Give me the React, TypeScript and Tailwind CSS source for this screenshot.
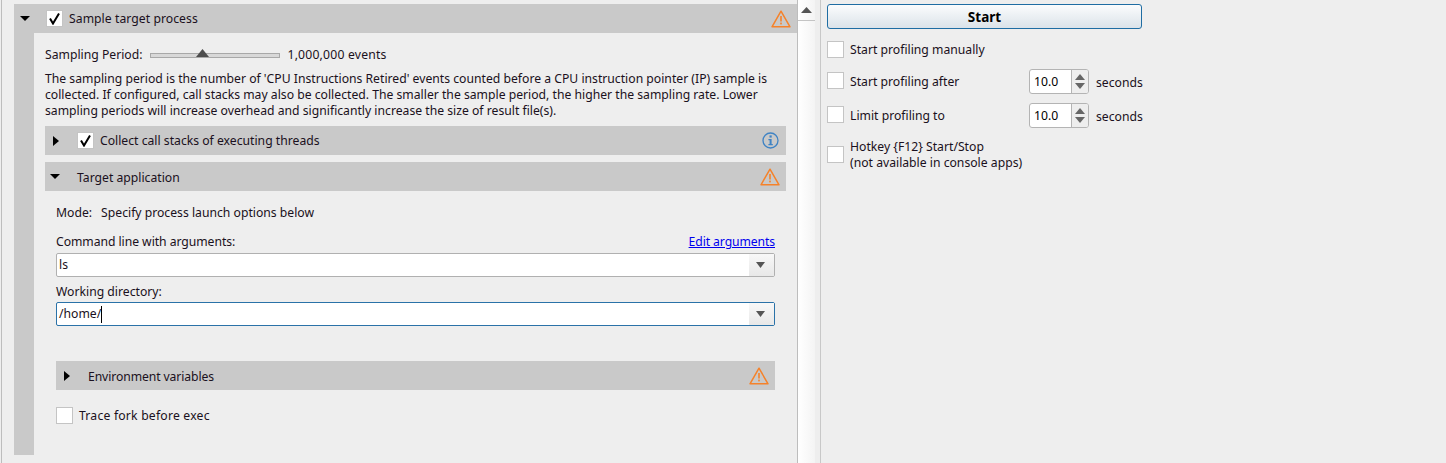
import React from "react";

const Warn = () => (
  <svg width="20" height="18" viewBox="0 0 20 18" fill="none" className="shrink-0">
    <path d="M10 1.2 L19 16.8 H1 Z" stroke="#f5822a" strokeWidth="1.5" strokeLinejoin="round" />
    <rect x="9.2" y="6" width="1.6" height="5.5" fill="#f5822a" />
    <rect x="9.2" y="12.6" width="1.6" height="1.8" fill="#f5822a" />
  </svg>
);

const Info = () => (
  <svg width="17" height="17" viewBox="0 0 17 17" fill="none" className="shrink-0">
    <circle cx="8.5" cy="8.5" r="7.5" stroke="#3f83c4" strokeWidth="1.3" />
    <rect x="7.5" y="3.4" width="2.2" height="2.2" fill="#3f83c4" />
    <path d="M6.4 7 H9.6 V12 H10.8 V13.2 H6.4 V12 H7.6 V8.2 H6.4 Z" fill="#3f83c4" />
  </svg>
);

const Down = () => (
  <svg width="10" height="5" viewBox="0 0 10 5" className="shrink-0"><path d="M0 0 H10 L5 5 Z" fill="#000" /></svg>
);
const Right = () => (
  <svg width="6" height="10" viewBox="0 0 6 10" className="shrink-0"><path d="M0 0 V10 L6 5 Z" fill="#000" /></svg>
);

const Check = ({ checked = false }: { checked?: boolean }) => (
  <div className="w-[17px] h-[17px] shrink-0 bg-white border border-[#c4c4c4] flex items-center justify-center">
    {checked && (
      <svg width="13" height="13" viewBox="0 0 13 13" fill="none">
        <path d="M2 6.5 L5 11.5 L11 1.5" stroke="#000" strokeWidth="2" />
      </svg>
    )}
  </div>
);

const Combo = ({ text, focused = false }: { text: string; focused?: boolean }) => (
  <div className={`h-[24px] flex items-stretch bg-white rounded-[2px] border ${focused ? "border-[#2a72a8]" : "border-[#b0b0b0]"}`}>
    <div className="flex-1 pl-[2px] flex items-center">
      <span>{text}</span>
      {focused && <span className="w-px h-[17px] bg-black" />}
    </div>
    <div className="w-[25px] pr-[3px] bg-gradient-to-b from-[#f8f8f8] to-[#e8e8e8] flex items-center justify-center">
      <svg width="9" height="6" viewBox="0 0 9 6"><path d="M0 0 H9 L4.5 6 Z" fill="#555" /></svg>
    </div>
  </div>
);

const Spin = () => (
  <div className="w-[60px] h-[25px] flex bg-white border border-[#b4b4b4] rounded-[3px] overflow-hidden">
    <div className="w-[41px] pl-[4px] flex items-center text-[#000]">10.0</div>
    <div className="flex-1 border-l border-[#b4b4b4] bg-[#eeeeee] flex flex-col items-center justify-center gap-[3px]">
      <svg width="10" height="6" viewBox="0 0 10 6"><path d="M5 0 L10 6 H0 Z" fill="#666" /></svg>
      <svg width="10" height="6" viewBox="0 0 10 6"><path d="M0 0 H10 L5 6 Z" fill="#666" /></svg>
    </div>
  </div>
);

export default function App() {
  return (
    <div
      className="w-[1446px] h-[463px] overflow-hidden flex bg-[#eeeeee] text-[12.2px] leading-[16px] text-[#1a1020]"
      style={{ fontFamily: '"Noto Sans", sans-serif' }}
    >
      {/* left pane */}
      <div className="w-[798px] h-full border-r border-[#bdbdbd] pl-px shrink-0">
        <div className="h-full border-l border-[#bdbdbd] pl-[12px] pt-[4px]">
          <div className="h-[29px] bg-[#c9c9c9] flex items-center pr-[6px]">
            <div className="w-[25px] pl-[6px]"><Down /></div>
            <div className="ml-[7px]"><Check checked /></div>
            <span className="ml-[6px] tracking-[0.05px]">Sample target process</span>
            <span className="ml-auto"><Warn /></span>
          </div>
          <div className="h-[422px] flex border-0">
            <div className="w-[20px] bg-[#c9c9c9] shrink-0" />
            <div className="flex-1 pl-[11px] pr-[11px]">
              <div className="h-[16px] mt-[14px] flex items-center">
                <span>Sampling Period:</span>
                <div className="relative ml-[8px] w-[130px] h-[5px] bg-[#d8d8d8] border border-[#a8a8a8]">
                  <svg className="absolute left-[45px] -top-[5px]" width="13" height="8" viewBox="0 0 13 8"><path d="M6.5 0 L13 8 H0 Z" fill="#4d4d4d" /></svg>
                </div>
                <span className="ml-[7px] tracking-[0.2px]">1,000,000 events</span>
              </div>
              <p className="mt-[8px] m-0">
                The sampling period is the number of 'CPU Instructions Retired' events counted before a CPU instruction pointer (IP) sample is<br />
                collected. If configured, call stacks may also be collected. The smaller the sample period, the higher the sampling rate. Lower<br />
                sampling periods will increase overhead and significantly increase the size of result file(s).
              </p>
              <div className="mt-[7px] h-[29px] bg-[#c9c9c9] flex items-center pr-[7px]">
                <div className="w-[19px] pl-[8px]"><Right /></div>
                <div className="ml-[13px]"><Check checked /></div>
                <span className="ml-[6px]">Collect call stacks of executing threads</span>
                <span className="ml-auto"><Info /></span>
              </div>
              <div className="mt-[7px] h-[29px] bg-[#c9c9c9] flex items-center pr-[6px]">
                <div className="w-[32px] pl-[5px]"><Down /></div>
                <span className="pt-[2px]">Target application</span>
                <span className="ml-auto"><Warn /></span>
              </div>
              <div className="px-[11px]">
                <div className="mt-[14px] h-[16px] flex">
                  <span>Mode:</span>
                  <span className="ml-[9px]">Specify process launch options below</span>
                </div>
                <div className="mt-[13px] h-[16px] flex justify-between">
                  <span className="tracking-[-0.05px]">Command line with arguments:</span>
                  <a className="text-[#0000ee] underline tracking-[-0.1px]">Edit arguments</a>
                </div>
                <div className="mt-[3px]"><Combo text="ls" /></div>
                <div className="mt-[7px] h-[16px]">Working directory:</div>
                <div className="mt-[2px]"><Combo text="/home/" focused /></div>
                <div className="mt-[35px] h-[29px] bg-[#c9c9c9] flex items-center pr-[6px]">
                  <div className="w-[32px] pl-[8px]"><Right /></div>
                  <span className="pt-[2px] tracking-[-0.1px]">Environment variables</span>
                  <span className="ml-auto"><Warn /></span>
                </div>
                <div className="mt-[16px] flex items-center">
                  <Check />
                  <span className="ml-[6px] pt-[2px] tracking-[0.2px]">Trace fork before exec</span>
                </div>
              </div>
            </div>
          </div>
        </div>
      </div>

      {/* scrollbar */}
      <div className="w-[23px] h-full shrink-0 border-r border-[#c8c8c8]">
        <div className="w-[17px] h-full bg-gradient-to-r from-[#ffffff] to-[#f4f4f4]">
          <div className="h-[21px] border-b border-[#c4c4c4] flex items-center justify-center">
            <svg width="11" height="6" viewBox="0 0 11 6"><path d="M5.5 0 L11 6 H0 Z" fill="#555" /></svg>
          </div>
        </div>
      </div>

      {/* right pane */}
      <div className="w-[322px] pl-[6px] pt-[4px] shrink-0">
        <button className="w-[315px] h-[25px] rounded-[3px] border border-[#1f6da3] bg-gradient-to-b from-[#fbfcfd] to-[#dbe3e9] font-bold text-[13.5px] text-black flex items-center justify-center" style={{ fontFamily: '"Noto Sans", sans-serif' }}>
          Start
        </button>
        <div className="mt-[11px] flex items-center">
          <Check />
          <span className="ml-[6px] pt-[2px]">Start profiling manually</span>
        </div>
        <div className="mt-[11px] flex items-center h-[25px]">
          <div className="mb-[2px]"><Check /></div>
          <span className="ml-[6px] w-[179px]">Start profiling after</span>
          <Spin />
          <span className="ml-[7px] pt-[2px]">seconds</span>
        </div>
        <div className="mt-[9px] flex items-center h-[25px]">
          <div className="mb-[2px]"><Check /></div>
          <span className="ml-[6px] w-[179px]">Limit profiling to</span>
          <Spin />
          <span className="ml-[7px] pt-[2px]">seconds</span>
        </div>
        <div className="mt-[9px] flex items-center">
          <Check />
          <span className="ml-[6px] pt-[2px]">Hotkey {"{F12}"} Start/Stop<br />(not available in console apps)</span>
        </div>
      </div>
    </div>
  );
}
